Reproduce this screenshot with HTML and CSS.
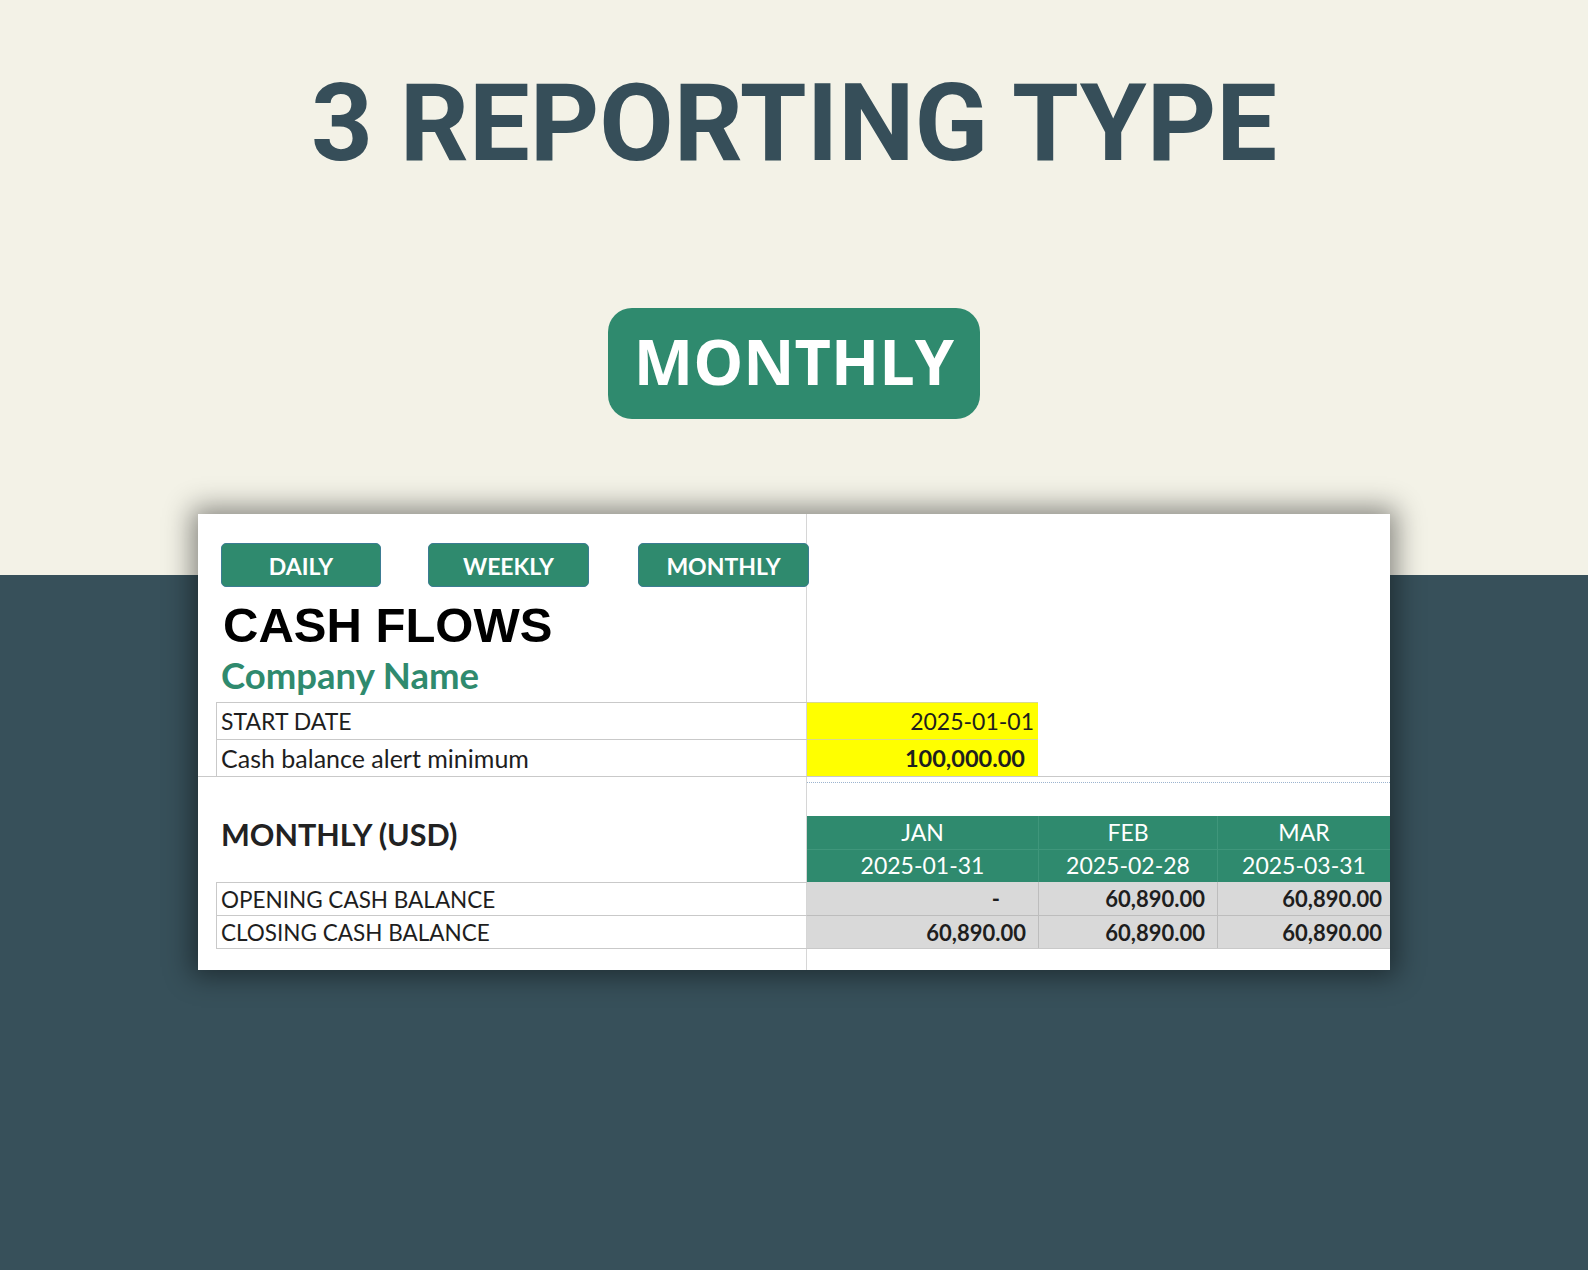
FILE: index.html
```html
<!DOCTYPE html>
<html lang="en">
<head>
    <meta charset="UTF-8">
    <meta name="viewport" content="width=device-width, initial-scale=1.0">
    <title>3 Reporting Type</title>
    <link rel="stylesheet" href="styles.css">
</head>
<body>
    <div class="page">
        <h1 class="headline">3 REPORTING TYPE</h1>
        <div class="pill">MONTHLY</div>

        <div class="sheet">
            <div class="sheet-head">
                <div class="tabs">
                    <span class="tab tab-daily">DAILY</span>
                    <span class="tab tab-weekly">WEEKLY</span>
                    <span class="tab tab-monthly">MONTHLY</span>
                </div>
                <div class="sheet-title">CASH FLOWS</div>
                <div class="company">Company Name</div>
            </div>

            <div class="params">
                <div class="prow">
                    <div class="plabel">START DATE</div>
                    <div class="pval">2025-01-01</div>
                </div>
                <div class="prow">
                    <div class="plabel plabel-lower">Cash balance alert minimum</div>
                    <div class="pval pval-bold">100,000.00</div>
                </div>
            </div>

            <div class="gap"><div class="dots"></div></div>

            <div class="report-head">
                <div class="report-title">MONTHLY (USD)</div>
                <div class="months">
                    <div class="mcell col-jan">JAN</div>
                    <div class="mcell col-feb">FEB</div>
                    <div class="mcell col-mar">MAR</div>
                    <div class="mcell col-jan">2025-01-31</div>
                    <div class="mcell col-feb">2025-02-28</div>
                    <div class="mcell col-mar">2025-03-31</div>
                </div>
            </div>

            <div class="drows">
                <div class="drow">
                    <div class="dlabel">OPENING CASH BALANCE</div>
                    <div class="dval col-jan dash">-</div>
                    <div class="dval col-feb">60,890.00</div>
                    <div class="dval col-mar">60,890.00</div>
                </div>
                <div class="drow">
                    <div class="dlabel">CLOSING CASH BALANCE</div>
                    <div class="dval col-jan">60,890.00</div>
                    <div class="dval col-feb">60,890.00</div>
                    <div class="dval col-mar">60,890.00</div>
                </div>
            </div>
        </div>
    </div>
</body>
</html>
```

FILE: styles.css
```css
* {
    box-sizing: border-box;
}
body {
    margin: 0;
    background-color: #37505a;
}
.page {
    min-height: 1270px;
    padding-top: 69px;
    background: linear-gradient(#f3f2e7 0, #f3f2e7 575px, #37505a 575px);
    overflow: hidden;
}
.headline {
    margin: 0;
    text-align: center;
    font-family: Roboto, sans-serif;
    font-weight: 700;
    font-size: 108px;
    line-height: 108px;
    color: #364e59;
}
.pill {
    width: 372px;
    height: 111px;
    margin: 131px auto 0;
    padding-bottom: 6px;
    display: flex;
    align-items: center;
    justify-content: center;
    background-color: #2f8a6e;
    border-radius: 24px;
    color: white;
    font-family: "Open Sans", sans-serif;
    font-weight: 700;
    font-size: 63px;
    line-height: 63px;
}

/* spreadsheet card */
.sheet {
    width: 1192px;
    margin: 95px auto 0;
    padding-bottom: 21px;
    background: white linear-gradient(to right, transparent 608px, #d6d6d6 608px, #d6d6d6 609px, transparent 609px);
    box-shadow: 0 0 26px 6px rgba(0, 0, 0, 0.45);
    font-family: Lato, "Open Sans", sans-serif;
    color: #1e1e1e;
}
.sheet-head {
    height: 188px;
    padding: 29px 0 0 23px;
}
.tabs {
    display: flex;
}
.tab {
    height: 44px;
    padding-top: 2px;
    display: flex;
    align-items: center;
    justify-content: center;
    background-color: #2f8a6e;
    border: 1.5px solid #3c7c92;
    border-radius: 5px;
    color: white;
    font-weight: 700;
    font-size: 23px;
}
.tab-daily {
    width: 160px;
}
.tab-weekly {
    width: 161px;
    margin-left: 47px;
}
.tab-monthly {
    width: 171px;
    margin-left: 49px;
}
.sheet-title {
    margin: 14px 0 0 2px;
    font-family: "Liberation Sans", Arial, sans-serif;
    font-weight: 700;
    font-size: 49px;
    line-height: 49px;
    color: #000;
}
.company {
    margin: 7px 0 0 0;
    font-weight: 700;
    font-size: 36.5px;
    line-height: 37px;
    color: #2f8a6e;
}

/* parameters */
.params {
    border-bottom: 1px solid #c9c9c9;
}
.prow {
    display: flex;
    height: 37px;
    padding-left: 18px;
}
.plabel {
    width: 591px;
    padding: 2px 0 0 4px;
    border-top: 1px solid #c9c9c9;
    border-left: 1px solid #c9c9c9;
    font-size: 23px;
    line-height: 33px;
}
.plabel-lower {
    font-size: 25px;
}
.pval {
    width: 231px;
    padding: 2px 4px 0 0;
    background-color: #ffff00;
    border-top: 1px solid #d9d98c;
    text-align: right;
    font-size: 23px;
    line-height: 33px;
}
.pval-bold {
    padding-right: 13px;
    font-weight: 700;
    font-size: 23.5px;
}
.gap {
    height: 39px;
    padding: 5px 0 0 609px;
}
.dots {
    border-top: 1px dotted #9cb4cf;
}

/* monthly report */
.report-head {
    display: flex;
    height: 66px;
}
.report-title {
    width: 609px;
    padding: 2px 0 0 23px;
    font-weight: 700;
    font-size: 30.5px;
    line-height: 32px;
    color: #222;
}
.months {
    display: grid;
    grid-template-columns: 231px 179px 173px;
    grid-template-rows: 33px 33px;
    background-color: #2f8a6e;
}
.mcell {
    color: white;
    text-align: center;
    font-size: 23px;
    line-height: 33px;
    border-left: 1px solid #3f967b;
}
.mcell.col-jan {
    border-left: none;
}
.mcell:nth-child(n+4) {
    border-top: 1px solid #3f967b;
    line-height: 31px;
}
.drows {
    border-bottom: 1px solid #c9c9c9;
    margin-left: 18px;
    background: linear-gradient(to right, transparent 591px, #a9c1dc 591px);
    background-size: 100% 1px;
    background-position: bottom;
    background-repeat: no-repeat;
}
.drow {
    display: flex;
    height: 33px;
}
.dlabel {
    width: 591px;
    padding: 1px 0 0 4px;
    border-top: 1px solid #c9c9c9;
    border-left: 1px solid #c9c9c9;
    font-size: 22.5px;
    line-height: 31px;
}
.dval {
    padding: 1px 12px 0 0;
    background-color: #d9d9d9;
    border-top: 1px solid #bdbdbd;
    border-left: 1px solid #bdbdbd;
    text-align: right;
    font-weight: 700;
    font-size: 22px;
    line-height: 31px;
}
.drow:first-child .dval {
    border-top: none;
}
.dval.col-jan {
    width: 231px;
    border-left: none;
}
.dval.col-feb {
    width: 179px;
}
.dval.col-mar {
    width: 173px;
    padding-right: 8px;
}
.dval.dash {
    padding-right: 38px;
}
```
